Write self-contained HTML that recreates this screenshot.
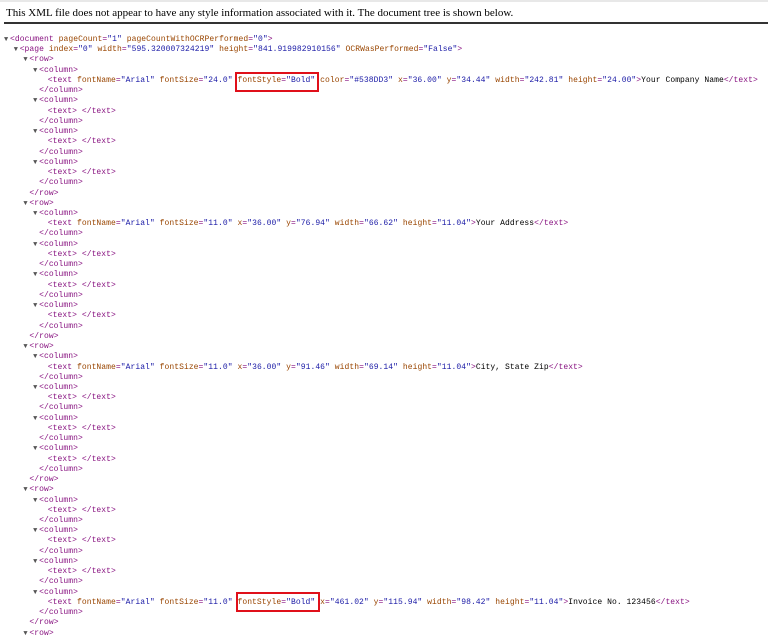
<!DOCTYPE html>
<html><head><meta charset="utf-8"><style>
body{margin:0;background:#fff;width:768px;height:640px;overflow:hidden;position:relative}
.hdr{position:absolute;left:6px;top:7px;font:11px "Liberation Serif",serif;color:#000;white-space:nowrap;letter-spacing:0}
.hl{position:absolute;left:4px;right:0;top:22px;height:2px;background:#333}
.top{position:absolute;left:0;right:0;top:0;height:2px;background:#e8e8e8}
.tree{position:absolute;left:0;top:35px;font:8px "Liberation Mono",monospace;line-height:10.24px;white-space:nowrap;color:#000;letter-spacing:0.06px}
.l{position:relative;height:10.24px}
.t{color:#881280}.a{color:#994500}.v{color:#1a1aa6}
.tri{position:absolute;color:#555;font-size:7px;top:0}
.box{position:absolute;border:2.5px solid #e0101a;box-sizing:border-box}
</style></head><body>
<div class="top"></div>
<div class="hdr">This XML file does not appear to have any style information associated with it. The document tree is shown below.</div>
<div class="hl"></div>
<div class="tree" id="tr"></div>
<div class="box" style="left:235px;top:72px;width:84px;height:20px"></div>
<div class="box" style="left:236px;top:592px;width:84px;height:20px"></div>
<script>
var L=[];
function open(lv,html){L.push([lv,true,html]);}
function line(lv,html){L.push([lv,false,html]);}
function T(s){return '<span class="t">'+s+'</span>';}
function A(n,v){return ' <span class="a">'+n+'</span><span class="t">=</span><span class="v">"'+v+'"</span>';}
open(0,T('&lt;document')+A('pageCount','1')+A('pageCountWithOCRPerformed','0')+T('&gt;'));
open(1,T('&lt;page')+A('index','0')+A('width','595.320007324219')+A('height','841.919982910156')+A('OCRWasPerformed','False')+T('&gt;'));
var rows=[
 [A('fontName','Arial')+A('fontSize','24.0')+A('fontStyle','Bold')+A('color','#538DD3')+A('x','36.00')+A('y','34.44')+A('width','242.81')+A('height','24.00'),'Your Company Name',0],
 [A('fontName','Arial')+A('fontSize','11.0')+A('x','36.00')+A('y','76.94')+A('width','66.62')+A('height','11.04'),'Your Address',0],
 [A('fontName','Arial')+A('fontSize','11.0')+A('x','36.00')+A('y','91.46')+A('width','69.14')+A('height','11.04'),'City, State Zip',0],
 [A('fontName','Arial')+A('fontSize','11.0')+A('fontStyle','Bold')+A('x','461.02')+A('y','115.94')+A('width','98.42')+A('height','11.04'),'Invoice No. 123456',3]
];
rows.forEach(function(r){
 open(2,T('&lt;row&gt;'));
 for(var c=0;c<4;c++){
  open(3,T('&lt;column&gt;'));
  if(c==r[2]) line(4,T('&lt;text')+r[0]+T('&gt;')+r[1]+T('&lt;/text&gt;'));
  else line(4,T('&lt;text&gt;')+' '+T('&lt;/text&gt;'));
  line(3.62,T('&lt;/column&gt;'));
 }
 line(2.62,T('&lt;/row&gt;'));
});
open(2,T('&lt;row&gt;'));
var h='';
L.forEach(function(x){
 var lv=x[0],tl=4+Math.floor(lv)*9.7;
 if(x[1]) h+='<div class="l"><span class="tri" style="left:'+tl+'px">&#9660;</span><span style="position:absolute;left:'+(tl+6)+'px">'+x[2]+'</span></div>';
 else {var left=(lv%1)?(4+Math.floor(lv)*9.7+6) : (4+lv*9.7+5);
   h+='<div class="l"><span style="position:absolute;left:'+left+'px">'+x[2]+'</span></div>';}
});
document.getElementById('tr').innerHTML=h;
</script>
</body></html>
